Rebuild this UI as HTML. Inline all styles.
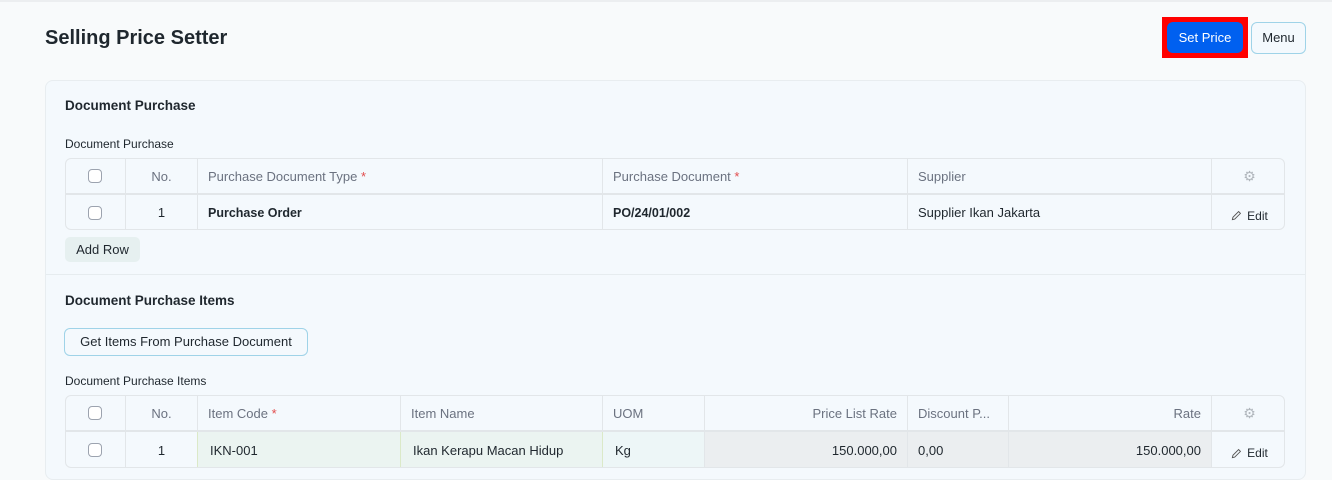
<!DOCTYPE html>
<html><head><style>
*{box-sizing:border-box;margin:0;padding:0}
body{width:1332px;height:471px;overflow:hidden;background:#f8fafb;font-family:"Liberation Sans",sans-serif;color:#1f272e;position:relative}
.a{position:absolute}
.card{left:45px;top:80px;width:1261px;height:400px;background:#f4f9fd;border:1px solid #e8edf0;border-radius:8px}
.t{position:absolute;border:1px solid #e2e6e9;border-radius:6px;background:#f4f9fd;overflow:hidden}
.w{position:absolute;left:-1px;top:-1px;width:1222px;height:100%}
.c{position:absolute;font-size:13px;display:flex;align-items:center;border-left:1px solid #e2e6e9;padding:0 10px;white-space:nowrap}
.h{color:#6b7280}
.cb{width:14px;height:14px;border:1px solid #9ca3af;border-radius:4px;background:#fff;margin:auto}
.req{color:#e24c4c}
b{font-weight:bold;font-size:12.5px}
.g{color:#b0b6bc;font-size:14px}
</style></head><body>
<div class="a" style="left:0;top:0;width:1332px;height:2px;background:#eceef0"></div>
<div class="a" style="left:45px;top:27px;font-size:20px;font-weight:bold">Selling Price Setter</div>
<div class="a" style="left:1162px;top:17px;width:86px;height:41px;background:#ff0000"></div>
<div class="a" style="left:1167px;top:22px;width:76px;height:31px;background:#0060f0;border-radius:6px;color:#fff;font-size:13px;text-align:center;line-height:31px">Set Price</div>
<div class="a" style="left:1251px;top:22px;width:55px;height:32px;border:1px solid #9fd3e8;border-radius:6px;background:#f4f9fd;font-size:13px;text-align:center;line-height:30px">Menu</div>
<div class="a card"></div>
<div class="a" style="left:65px;top:98px;font-size:13.5px;font-weight:bold">Document Purchase</div>
<div class="a" style="left:65px;top:137px;font-size:12px">Document Purchase</div>
<div class="t" style="left:65px;top:158px;width:1220px;height:72px"><div class="w">
 <div class="a" style="left:0;top:35px;width:1222px;height:2px;background:#e2e6e9"></div>
 <div class="c" style="left:0;top:0;width:60px;height:36px;border:0"><div class="cb"></div></div>
 <div class="c h" style="left:60px;top:0;width:72px;height:36px;justify-content:center">No.</div>
 <div class="c h" style="left:132px;top:0;width:405px;height:36px">Purchase Document Type&nbsp;<span class="req">*</span></div>
 <div class="c h" style="left:537px;top:0;width:305px;height:36px">Purchase Document&nbsp;<span class="req">*</span></div>
 <div class="c h" style="left:842px;top:0;width:304px;height:36px">Supplier</div>
 <div class="c g" style="left:1146px;top:0;width:76px;height:36px;justify-content:center">⚙</div>
 <div class="c" style="left:0;top:37px;width:60px;height:35px;border:0"><div class="cb"></div></div>
 <div class="c" style="left:60px;top:37px;width:72px;height:35px;justify-content:center">1</div>
 <div class="c" style="left:132px;top:37px;width:405px;height:35px"><b>Purchase Order</b></div>
 <div class="c" style="left:537px;top:37px;width:305px;height:35px"><b>PO/24/01/002</b></div>
 <div class="c" style="left:842px;top:37px;width:304px;height:35px">Supplier Ikan Jakarta</div>
 <div class="c" style="left:1146px;top:37px;width:76px;height:35px;justify-content:center;font-size:12px;padding-top:6px"><svg width="11" height="11" viewBox="0 0 12 12" style="margin-right:5px"><path d="M1.5 10.5l.6-2.6L8.3 1.7l2 2-6.2 6.2z" fill="none" stroke="#555" stroke-width="1"/></svg>Edit</div>
</div></div>
<div class="a" style="left:65px;top:237px;width:75px;height:25px;background:#e6f0f0;border-radius:5px;font-size:13px;text-align:center;line-height:25px">Add Row</div>
<div class="a" style="left:46px;top:274px;width:1259px;height:1px;background:#e6ecef"></div>
<div class="a" style="left:65px;top:293px;font-size:13.5px;font-weight:bold">Document Purchase Items</div>
<div class="a" style="left:64px;top:328px;width:244px;height:28px;border:1px solid #9fd3e8;border-radius:6px;font-size:13px;text-align:center;line-height:26px">Get Items From Purchase Document</div>
<div class="a" style="left:65px;top:374px;font-size:12px">Document Purchase Items</div>
<div class="t" style="left:65px;top:395px;width:1220px;height:73px"><div class="w">
 <div class="a" style="left:0;top:35px;width:1222px;height:2px;background:#e2e6e9"></div>
 <div class="c" style="left:0;top:0;width:60px;height:36px;border:0"><div class="cb"></div></div>
 <div class="c h" style="left:60px;top:0;width:72px;height:36px;justify-content:center">No.</div>
 <div class="c h" style="left:132px;top:0;width:203px;height:36px">Item Code&nbsp;<span class="req">*</span></div>
 <div class="c h" style="left:335px;top:0;width:202px;height:36px">Item Name</div>
 <div class="c h" style="left:537px;top:0;width:102px;height:36px">UOM</div>
 <div class="c h" style="left:639px;top:0;width:203px;height:36px;justify-content:flex-end">Price List Rate</div>
 <div class="c h" style="left:842px;top:0;width:101px;height:36px">Discount P...</div>
 <div class="c h" style="left:943px;top:0;width:203px;height:36px;justify-content:flex-end">Rate</div>
 <div class="c g" style="left:1146px;top:0;width:76px;height:36px;justify-content:center">⚙</div>
 <div class="c" style="left:0;top:37px;width:60px;height:36px;border:0"><div class="cb"></div></div>
 <div class="c" style="left:60px;top:37px;width:72px;height:36px;justify-content:center">1</div>
 <div class="c" style="left:132px;top:37px;width:203px;height:36px;background:#ebf4f1;border-color:#dbe9c8;padding-left:12px">IKN-001</div>
 <div class="c" style="left:335px;top:37px;width:202px;height:36px;background:#ebf4f1;border-color:#dbe9c8;padding-left:12px">Ikan Kerapu Macan Hidup</div>
 <div class="c" style="left:537px;top:37px;width:102px;height:36px;background:#edf6f7;border-color:#dbe9c8;padding-left:12px">Kg</div>
 <div class="c" style="left:639px;top:37px;width:203px;height:36px;background:#ebeef0;justify-content:flex-end">150.000,00</div>
 <div class="c" style="left:842px;top:37px;width:101px;height:36px;background:#ebeef0">0,00</div>
 <div class="c" style="left:943px;top:37px;width:203px;height:36px;background:#ebeef0;justify-content:flex-end">150.000,00</div>
 <div class="c" style="left:1146px;top:37px;width:76px;height:36px;justify-content:center;font-size:12px;padding-top:6px"><svg width="11" height="11" viewBox="0 0 12 12" style="margin-right:5px"><path d="M1.5 10.5l.6-2.6L8.3 1.7l2 2-6.2 6.2z" fill="none" stroke="#555" stroke-width="1"/></svg>Edit</div>
</div></div>
</body></html>
